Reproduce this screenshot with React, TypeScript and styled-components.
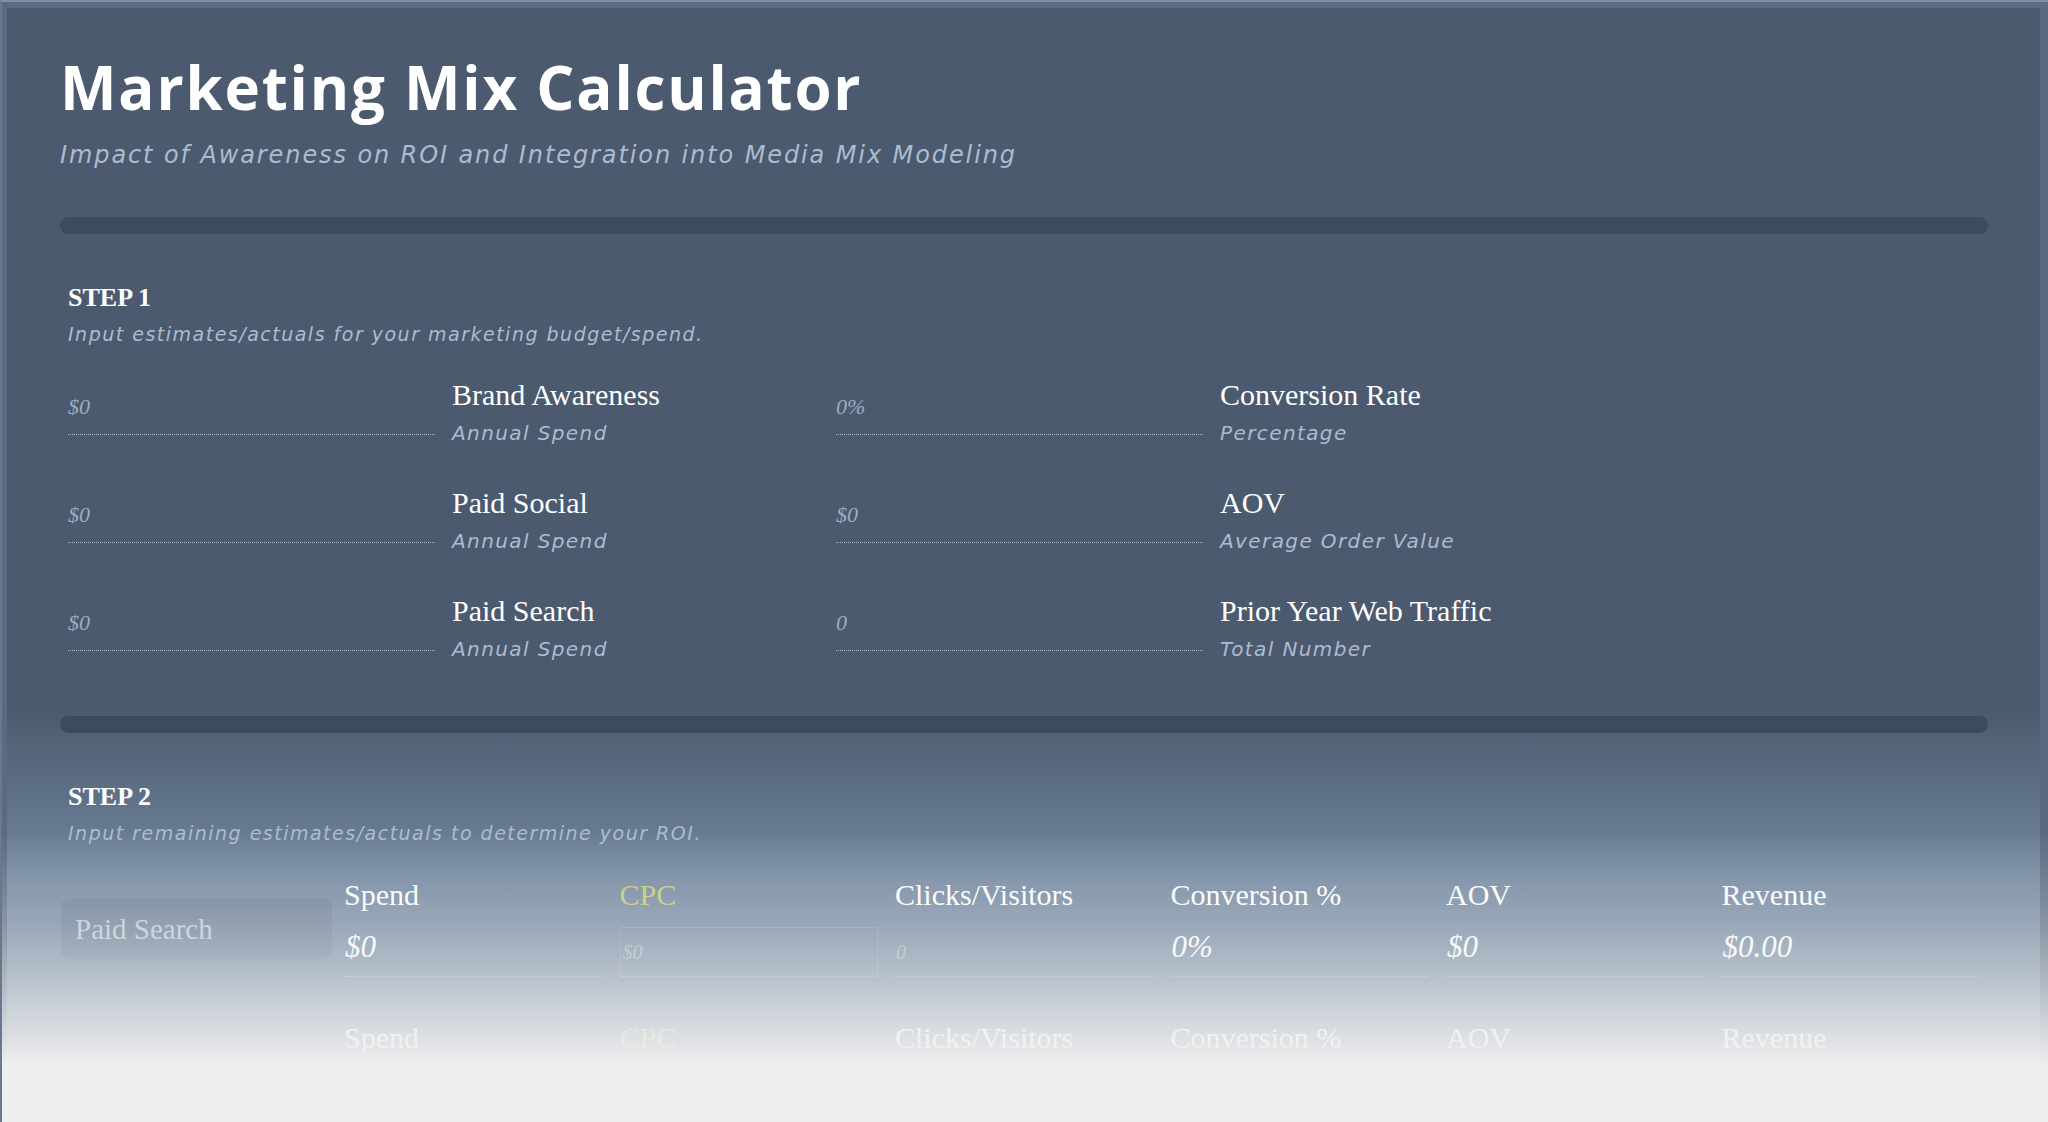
import React from 'react';
import styled, { createGlobalStyle } from 'styled-components';

const SANS = `'DejaVu Sans', 'Open Sans', sans-serif`;
const SERIF = `'Liberation Serif', 'DejaVu Serif', serif`;

const GlobalStyle = createGlobalStyle`
  html, body {
    margin: 0;
    padding: 0;
    background: #efefef;
    overflow: hidden;
  }
  * {
    box-sizing: border-box;
  }
`;

const Page = styled.div`
  position: relative;
  height: 100vh;
  overflow: hidden;
  background: #5a6a80;
  border-top: 2px solid #8091a7;
  border-left: 2px solid #68788e;
  padding: 6px 8px 0 5px;
`;

// card turns a lighter slate towards the bottom before the fade takes over
const Card = styled.div`
  min-height: 100%;
  padding: 43px 52px 0 53px;
  background: linear-gradient(to bottom, #4b5a6e 0px, #4b5a6e 700px, #71869f 870px, #71869f 100%);
`;

const FadeOverlay = styled.div`
  position: absolute;
  inset: 0;
  pointer-events: none;
  background: linear-gradient(
    to bottom,
    rgba(239, 239, 239, 0) 0px,
    rgba(239, 239, 239, 0) 830px,
    rgba(239, 239, 239, 0.35) 930px,
    rgba(239, 239, 239, 1) 1065px,
    rgba(239, 239, 239, 1) 100%
  );
`;

const Title = styled.h1`
  margin: 0;
  font-family: 'Open Sans', sans-serif;
  font-weight: 700;
  font-size: 60px;
  line-height: 72px;
  color: #ffffff;
  letter-spacing: 1.8px;
`;

const Subtitle = styled.p`
  margin: 16px 0 0;
  font-family: ${SANS};
  font-weight: 200;
  font-style: italic;
  font-size: 24px;
  line-height: 32px;
  letter-spacing: 1.9px;
  color: #aebbd0;
`;

const Divider = styled.div<{ $top: number }>`
  height: 17px;
  border-radius: 9px;
  background: #3c4b5f;
  margin: ${(p) => p.$top}px 0 0;
`;

const Section = styled.section`
  padding: 0 0 0 8px;
`;

const StepTitle = styled.h2`
  margin: 48px 0 0;
  font-family: ${SERIF};
  font-weight: 700;
  font-size: 26px;
  line-height: 32px;
  color: #ffffff;
`;

const StepText = styled.p`
  margin: 7px 0 0;
  font-family: ${SANS};
  font-weight: 200;
  font-style: italic;
  font-size: 19px;
  line-height: 26px;
  letter-spacing: 1.5px;
  color: #aebbd0;
`;

const FieldGrid = styled.div`
  display: grid;
  grid-template-columns: 768px 768px;
  row-gap: 38px;
  margin-top: 30px;
`;

const Field = styled.div`
  display: flex;
  align-items: flex-start;
  gap: 17px;
`;

const LineInput = styled.input`
  width: 367px;
  height: 56px;
  margin-top: 2px;
  padding: 0;
  border: none;
  border-bottom: 1px dotted rgba(214, 224, 238, 0.7);
  background: transparent;
  font-family: ${SERIF};
  font-style: italic;
  font-size: 22px;
  color: #ffffff;
  outline: none;
  &::placeholder {
    color: #9eacc0;
  }
`;

const FieldText = styled.div`
  display: flex;
  flex-direction: column;
`;

const FieldLabel = styled.span`
  font-family: ${SERIF};
  font-size: 30px;
  line-height: 36px;
  margin-bottom: 6px;
  color: #ffffff;
`;

const FieldHint = styled.span`
  font-family: ${SANS};
  font-weight: 200;
  font-style: italic;
  font-size: 20px;
  line-height: 28px;
  letter-spacing: 1.4px;
  color: #aebbd0;
`;

const Table = styled.div`
  display: flex;
  flex-direction: column;
  gap: 43px;
  margin: 31px 0 0 -9px;
`;

const TableRow = styled.div`
  display: flex;
  align-items: center;
`;

const ChannelBox = styled.div`
  width: 271px;
  height: 60px;
  margin: 4px 12px 0 2px;
  border-radius: 8px;
  background: rgba(60, 75, 95, 0.18);
  padding: 0 14px;
  display: flex;
  align-items: center;
  font-family: ${SERIF};
  font-size: 29px;
  color: #bcc7d6;
`;

const Columns = styled.div`
  display: grid;
  grid-template-columns: repeat(6, 258px);
  column-gap: 17.5px;
`;

const Column = styled.div`
  display: flex;
  flex-direction: column;
  gap: 14px;
`;

const ColHead = styled.span<{ $accent?: boolean }>`
  font-family: ${SERIF};
  font-size: 30px;
  line-height: 36px;
  color: ${(p) => (p.$accent ? '#c2c968' : '#ffffff')};
`;

const ValueCell = styled.div<{ $boxed?: boolean; $muted?: boolean }>`
  height: 50px;
  display: flex;
  align-items: center;
  padding: 0 0 ${(p) => (p.$muted ? '0' : '10px')} ${(p) => (p.$boxed ? '2px' : '0')};
  border: 1px solid ${(p) => (p.$boxed ? 'rgba(255, 255, 255, 0.12)' : 'transparent')};
  border-bottom: 1px dotted rgba(255, 255, 255, 0.35);
  font-family: ${SERIF};
  font-style: italic;
  font-size: ${(p) => (p.$muted ? '20px' : '31px')};
  color: ${(p) => (p.$muted ? 'rgba(255, 255, 255, 0.35)' : '#ffffff')};
`;

type Budget = { label: string; hint: string; placeholder: string };

const budgetFields: Budget[] = [
  { label: 'Brand Awareness', hint: 'Annual Spend', placeholder: '$0' },
  { label: 'Conversion Rate', hint: 'Percentage', placeholder: '0%' },
  { label: 'Paid Social', hint: 'Annual Spend', placeholder: '$0' },
  { label: 'AOV', hint: 'Average Order Value', placeholder: '$0' },
  { label: 'Paid Search', hint: 'Annual Spend', placeholder: '$0' },
  { label: 'Prior Year Web Traffic', hint: 'Total Number', placeholder: '0' },
];

type Cell = { head: string; value: string; accent?: boolean; boxed?: boolean; muted?: boolean };

const cells: Cell[] = [
  { head: 'Spend', value: '$0' },
  { head: 'CPC', value: '$0', accent: true, boxed: true, muted: true },
  { head: 'Clicks/Visitors', value: '0', muted: true },
  { head: 'Conversion %', value: '0%' },
  { head: 'AOV', value: '$0' },
  { head: 'Revenue', value: '$0.00' },
];

const channels = ['Paid Search', 'Paid Social'];

const App = () => {
  return (
    <Page>
      <GlobalStyle />
      <Card>
        <Title>Marketing Mix Calculator</Title>
        <Subtitle>Impact of Awareness on ROI and Integration into Media Mix Modeling</Subtitle>
        <Divider $top={46} />

        <Section>
          <StepTitle>STEP 1</StepTitle>
          <StepText>Input estimates/actuals for your marketing budget/spend.</StepText>
          <FieldGrid>
            {budgetFields.map((f) => (
              <Field key={f.label}>
                <LineInput placeholder={f.placeholder} readOnly />
                <FieldText>
                  <FieldLabel>{f.label}</FieldLabel>
                  <FieldHint>{f.hint}</FieldHint>
                </FieldText>
              </Field>
            ))}
          </FieldGrid>
        </Section>

        <Divider $top={53} />

        <Section>
          <StepTitle>STEP 2</StepTitle>
          <StepText>Input remaining estimates/actuals to determine your ROI.</StepText>
          <Table>
            {channels.map((c) => (
              <TableRow key={c}>
                <ChannelBox>{c}</ChannelBox>
                <Columns>
                  {cells.map((cell) => (
                    <Column key={cell.head}>
                      <ColHead $accent={cell.accent}>{cell.head}</ColHead>
                      <ValueCell $boxed={cell.boxed} $muted={cell.muted}>
                        {cell.value}
                      </ValueCell>
                    </Column>
                  ))}
                </Columns>
              </TableRow>
            ))}
          </Table>
        </Section>
      </Card>
      <FadeOverlay />
    </Page>
  );
};

export default App;
